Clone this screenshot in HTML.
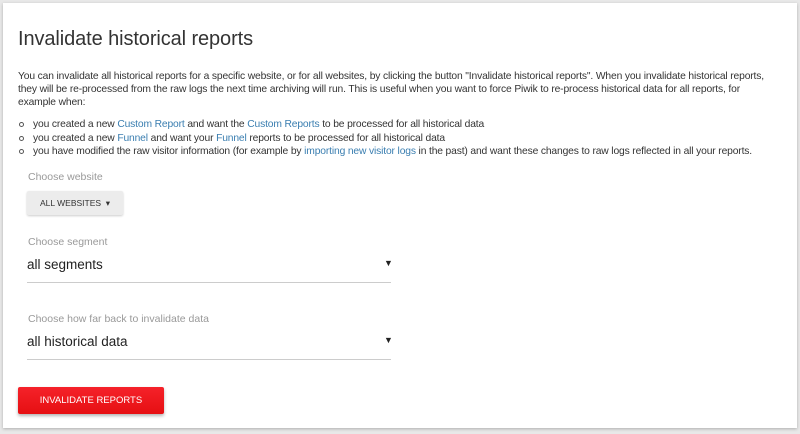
<!DOCTYPE html>
<html><head><style>
body{margin:0;width:800px;height:434px;background:#e8e8e8;font-family:"Liberation Sans",sans-serif;overflow:hidden;position:relative}
.card{position:absolute;left:3px;top:3px;width:794px;height:425px;background:#fff;box-shadow:0 1px 3px rgba(0,0,0,.25)}
.a{position:absolute;white-space:nowrap}
h1{position:absolute;left:15px;top:25px;margin:0;font-weight:normal;font-size:20px;color:#333;letter-spacing:-0.1px}
p{position:absolute;left:15px;top:67px;margin:0;font-size:10.3px;line-height:13px;color:#333;letter-spacing:-0.15px;white-space:nowrap}
ul{position:absolute;left:15px;top:115px;margin:0;padding:0;list-style:none;font-size:10.3px;line-height:13.5px;color:#333;letter-spacing:-0.15px;white-space:nowrap}
li{position:relative;padding-left:15px}
li:before{content:"";position:absolute;left:1px;top:4px;width:3px;height:3px;border:1px solid #555;border-radius:50%}
a{color:#3a7eb0;text-decoration:none}
.lab{font-size:10.5px;color:#999}
.btn{position:absolute;left:24px;top:188px;width:96px;height:24px;background:#ececec;border-radius:2px;box-shadow:0 1px 2px rgba(0,0,0,.2);font-size:8.5px;color:#333;text-align:center;line-height:24px}
.sel{font-size:13.5px;color:#222}
.line{position:absolute;left:24px;width:364px;height:1px;background:#ccc}
.arr{position:absolute;left:381px;font-size:9px;color:#222}
.red{position:absolute;left:15px;top:384px;width:146px;height:27px;background:linear-gradient(#f5222a,#e60f12);border-radius:2px;box-shadow:0 2px 3px rgba(0,0,0,.3);color:#fff;font-size:9.5px;text-align:center;line-height:27px}
</style></head><body>
<div class="card">
<h1>Invalidate historical reports</h1>
<p>You can invalidate all historical reports for a specific website, or for all websites, by clicking the button "Invalidate historical reports". When you invalidate historical reports,<br>they will be re-processed from the raw logs the next time archiving will run. This is useful when you want to force Piwik to re-process historical data for all reports, for<br>example when:</p>
<ul>
<li>you created a new <a>Custom Report</a> and want the <a>Custom Reports</a> to be processed for all historical data</li>
<li>you created a new <a>Funnel</a> and want your <a>Funnel</a> reports to be processed for all historical data</li>
<li>you have modified the raw visitor information (for example by <a>importing new visitor logs</a> in the past) and want these changes to raw logs reflected in all your reports.</li>
</ul>
<div class="a lab" style="left:25px;top:168px">Choose website</div>
<div class="btn">ALL WEBSITES &nbsp;▾</div>
<div class="a lab" style="left:25px;top:233px">Choose segment</div>
<div class="a sel" style="left:24px;top:254px">all segments</div>
<div class="arr" style="top:255px">▼</div>
<div class="line" style="top:279px"></div>
<div class="a lab" style="left:25px;top:310px">Choose how far back to invalidate data</div>
<div class="a sel" style="left:24px;top:331px">all historical data</div>
<div class="arr" style="top:332px">▼</div>
<div class="line" style="top:356px"></div>
<div class="red">INVALIDATE REPORTS</div>
</div>
</body></html>
